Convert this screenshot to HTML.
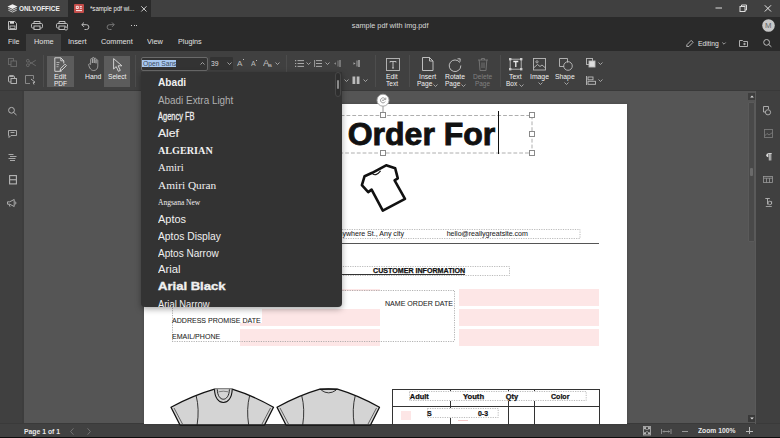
<!DOCTYPE html>
<html><head><meta charset="utf-8">
<style>
*{margin:0;padding:0;box-sizing:border-box}
html,body{width:780px;height:438px;overflow:hidden;background:#555;font-family:"Liberation Sans",sans-serif;position:relative}
.a{position:absolute}
.t{position:absolute;white-space:nowrap;line-height:1;transform-origin:0 0}
svg{position:absolute;overflow:visible}
</style></head><body>
<div class="a" style="left:0px;top:0px;width:780px;height:17px;background:#404040;"></div>
<div class="a" style="left:0px;top:0px;width:68px;height:17px;background:#434343;"></div>
<div class="a" style="left:68px;top:0px;width:83px;height:17px;background:#2a2a2a;"></div>
<div class="a" style="left:0px;top:17px;width:780px;height:34px;background:#2a2a2a;"></div>
<div class="a" style="left:26px;top:34px;width:35px;height:17px;background:#404040;"></div>
<div class="a" style="left:0px;top:51px;width:780px;height:39px;background:#404040;"></div>
<div class="a" style="left:0px;top:90px;width:780px;height:1.2px;background:#393939;"></div>
<div class="a" style="left:24px;top:91px;width:732px;height:333px;background:#555;"></div>
<div class="a" style="left:0px;top:91px;width:24px;height:333px;background:#404040;"></div>
<div class="a" style="left:22px;top:91px;width:2px;height:333px;background:#3d3d3d;"></div>
<div class="a" style="left:756px;top:91px;width:24px;height:333px;background:#404040;"></div>
<div class="a" style="left:0px;top:423.5px;width:780px;height:14px;background:#414141;"></div>
<div class="a" style="left:0px;top:423px;width:780px;height:1px;background:#3a3a3a;"></div>
<div class="a" style="left:0px;top:437px;width:780px;height:1px;background:#0c0c0c;"></div>
<div class="a" style="left:143.5px;top:103.5px;width:483.5px;height:320.5px;background:#fff;box-shadow:0 0 3px rgba(0,0,0,0.18)"></div>
<svg style="left:7px;top:4px" width="11" height="9" viewBox="0 0 11 9">
<path d="M5.5 0.3 L10.5 2.6 L5.5 4.9 L0.5 2.6 Z" fill="#f0f0f0"/>
<path d="M1.3 4.3 L5.5 6.2 L9.7 4.3" fill="none" stroke="#d8d8d8" stroke-width="1"/>
<path d="M1.3 6.2 L5.5 8.1 L9.7 6.2" fill="none" stroke="#c8c8c8" stroke-width="1"/>
</svg>
<div class="t" style="left:19.00px;top:5.71px;font-size:6.6px;font-family:'Liberation Sans';font-weight:700;color:#f0f0f0;transform:scaleX(0.971);">ONLYOFFICE</div>
<div class="a" style="left:74px;top:4px;width:10px;height:9px;background:#c44d4a;border-radius:1px"></div>
<svg style="left:74px;top:4px" width="10" height="9" viewBox="0 0 10 9"><path d="M2.3 2.3h2v2.2h-2z" fill="none" stroke="#fff" stroke-width="0.9"/><path d="M5.8 2.6h2M5.8 4.3h2M2 6.6h6" stroke="#fff" stroke-width="0.9"/></svg>
<div class="t" style="left:89.60px;top:5.69px;font-size:6.5px;font-family:'Liberation Sans';font-weight:400;color:#f0f0f0;transform:scaleX(0.931);">*sample pdf wi...</div>
<svg style="left:140.8px;top:6px" width="6" height="6" viewBox="0 0 6 6"><path d="M0.3 0.3L5.5 5.5M5.5 0.3L0.3 5.5" stroke="#ddd" stroke-width="0.9"/></svg>
<svg style="left:715px;top:7px" width="8" height="2" viewBox="0 0 8 2"><path d="M0.5 1h6.5" stroke="#ddd" stroke-width="1"/></svg>
<svg style="left:739px;top:4px" width="9" height="9" viewBox="0 0 9 9"><rect x="1" y="2.5" width="5" height="5" fill="none" stroke="#ddd" stroke-width="1"/><path d="M2.5 2.5V1h5v5H6" fill="none" stroke="#ddd" stroke-width="1"/></svg>
<svg style="left:764px;top:5px" width="8" height="7" viewBox="0 0 8 7"><path d="M0.8 0.3L7 6.5M7 0.3L0.8 6.5" stroke="#e8e8e8" stroke-width="1"/></svg>
<svg style="left:8px;top:21px" width="9" height="9" viewBox="0 0 9 9">
<path d="M0.5 0.5h6.2l1.8 1.8v6.2h-8z" fill="none" stroke="#bdbdbd" stroke-width="1"/>
<rect x="2" y="0.5" width="4" height="2.2" fill="#ddd"/><rect x="2" y="5" width="5" height="2.6" fill="none" stroke="#bdbdbd" stroke-width="0.9"/></svg>
<svg style="left:31px;top:21px" width="12" height="9" viewBox="0 0 12 9">
<path d="M3 2.5V0.5h6v2" fill="none" stroke="#bdbdbd" stroke-width="1"/>
<rect x="0.5" y="2.5" width="11" height="4.5" rx="1.2" fill="none" stroke="#bdbdbd" stroke-width="1"/>
<rect x="3" y="5" width="6" height="3.5" fill="#2a2a2a" stroke="#bdbdbd" stroke-width="1"/></svg>
<svg style="left:55.5px;top:21px" width="12" height="9" viewBox="0 0 12 9">
<path d="M3 2.5V0.5h6v2" fill="none" stroke="#bdbdbd" stroke-width="1"/>
<rect x="0.5" y="2.5" width="11" height="4.5" rx="1.2" fill="none" stroke="#bdbdbd" stroke-width="1"/>
<rect x="3" y="5" width="6" height="3.5" fill="#2a2a2a" stroke="#bdbdbd" stroke-width="1"/><circle cx="10" cy="7.5" r="1.6" fill="#2a2a2a" stroke="#bdbdbd" stroke-width="0.9"/></svg>
<svg style="left:81px;top:22px" width="9" height="8" viewBox="0 0 9 8">
<path d="M3 0.5L0.8 2.7L3 4.9" fill="none" stroke="#bdbdbd" stroke-width="1"/><path d="M0.8 2.7H5.5a2.4 2.4 0 0 1 0 4.8H3.5" fill="none" stroke="#bdbdbd" stroke-width="1"/></svg>
<svg style="left:105.5px;top:22px" width="9" height="8" viewBox="0 0 9 8">
<path d="M6 0.5L8.2 2.7L6 4.9" fill="none" stroke="#777" stroke-width="1"/><path d="M8.2 2.7H3.5a2.4 2.4 0 0 0 0 4.8H5.5" fill="none" stroke="#777" stroke-width="1"/></svg>
<div class="a" style="left:131px;top:24.6px;width:1.2px;height:1.2px;background:#ccc;"></div>
<div class="a" style="left:133.6px;top:24.6px;width:1.2px;height:1.2px;background:#ccc;"></div>
<div class="a" style="left:136.2px;top:24.6px;width:1.2px;height:1.2px;background:#ccc;"></div>
<div class="t" style="left:351.80px;top:21.62px;font-size:7.3px;font-family:'Liberation Sans';font-weight:400;color:#d9d9d9;">sample pdf with img.pdf</div>
<svg style="left:761.5px;top:19px" width="13" height="13" viewBox="0 0 13 13"><circle cx="6.5" cy="6.5" r="6.3" fill="#c8c8c8"/></svg>
<div class="t" style="left:765.00px;top:22.79px;font-size:6.5px;font-family:'Liberation Sans';font-weight:400;color:#666;transform:scaleX(1.201);">M</div>
<div class="t" style="left:7.70px;top:38.36px;font-size:7.6px;font-family:'Liberation Sans';font-weight:400;color:#e2e2e2;transform:scaleX(0.930);">File</div>
<div class="t" style="left:33.60px;top:38.36px;font-size:7.6px;font-family:'Liberation Sans';font-weight:400;color:#e2e2e2;transform:scaleX(0.967);">Home</div>
<div class="t" style="left:67.60px;top:38.36px;font-size:7.6px;font-family:'Liberation Sans';font-weight:400;color:#e2e2e2;transform:scaleX(0.974);">Insert</div>
<div class="t" style="left:100.90px;top:38.36px;font-size:7.6px;font-family:'Liberation Sans';font-weight:400;color:#e2e2e2;transform:scaleX(0.962);">Comment</div>
<div class="t" style="left:146.90px;top:38.36px;font-size:7.6px;font-family:'Liberation Sans';font-weight:400;color:#e2e2e2;transform:scaleX(0.972);">View</div>
<div class="t" style="left:177.60px;top:38.36px;font-size:7.6px;font-family:'Liberation Sans';font-weight:400;color:#e2e2e2;transform:scaleX(0.947);">Plugins</div>
<svg style="left:686px;top:40px" width="8" height="7" viewBox="0 0 8 7"><path d="M0.6 6.4L1 4.6L5.2 0.4L7.1 2.3L2.9 6.5Z" fill="none" stroke="#bdbdbd" stroke-width="0.9"/></svg>
<div class="t" style="left:697.50px;top:39.53px;font-size:7.4px;font-family:'Liberation Sans';font-weight:400;color:#e2e2e2;transform:scaleX(0.915);">Editing</div>
<svg style="left:722px;top:42px" width="4" height="3" viewBox="0 0 4 3"><path d="M0.3 0.5L2 2.2L3.7 0.5" fill="none" stroke="#bdbdbd" stroke-width="0.8"/></svg>
<svg style="left:739px;top:39.5px" width="9" height="7" viewBox="0 0 9 7"><path d="M0.5 0.5h3l1 1h4v5h-8z" fill="none" stroke="#bdbdbd" stroke-width="0.9"/><path d="M4 4h3M5.5 2.8V5.2" stroke="#bdbdbd" stroke-width="0.8"/></svg>
<svg style="left:763px;top:39px" width="9" height="8" viewBox="0 0 9 8"><circle cx="3.6" cy="3.4" r="2.9" fill="none" stroke="#bdbdbd" stroke-width="1"/><path d="M5.7 5.5L8.4 7.8" stroke="#bdbdbd" stroke-width="1"/></svg>
<div class="a" style="left:43px;top:55px;width:1px;height:32px;background:#4d4d4d;"></div>
<div class="a" style="left:135px;top:55px;width:1px;height:32px;background:#4d4d4d;"></div>
<div class="a" style="left:286px;top:55px;width:1px;height:32px;background:#4d4d4d;"></div>
<div class="a" style="left:374.5px;top:55px;width:1px;height:32px;background:#4d4d4d;"></div>
<div class="a" style="left:409px;top:55px;width:1px;height:32px;background:#4d4d4d;"></div>
<div class="a" style="left:499.5px;top:55px;width:1px;height:32px;background:#4d4d4d;"></div>
<svg style="left:8px;top:58px" width="9" height="9" viewBox="0 0 9 9"><rect x="0.5" y="0.5" width="5" height="6" fill="none" stroke="#6c6c6c" stroke-width="0.9"/><rect x="3" y="3" width="5.5" height="5.5" fill="#404040" stroke="#6c6c6c" stroke-width="0.9"/></svg>
<svg style="left:25.5px;top:58.5px" width="10" height="8" viewBox="0 0 10 8"><circle cx="1.8" cy="1.8" r="1.4" fill="none" stroke="#6c6c6c" stroke-width="0.9"/><circle cx="1.8" cy="6.2" r="1.4" fill="none" stroke="#6c6c6c" stroke-width="0.9"/><path d="M3 2.5L9.8 6.8M3 5.5L9.8 1.2" stroke="#6c6c6c" stroke-width="0.9"/></svg>
<svg style="left:8px;top:75px" width="9" height="9" viewBox="0 0 9 9"><rect x="0.5" y="1" width="6" height="6" rx="1" fill="none" stroke="#bdbdbd" stroke-width="0.9"/><rect x="1.5" y="0.3" width="4" height="1.5" fill="#bdbdbd"/><rect x="3" y="3.5" width="5.5" height="5" fill="#404040" stroke="#bdbdbd" stroke-width="0.9"/></svg>
<svg style="left:25px;top:75px" width="11" height="10" viewBox="0 0 11 10"><path d="M5 8.5H0.5V0.5H8.5V4" fill="none" stroke="#9a9a9a" stroke-width="0.8"/><path d="M6 4L10 7.2L8.2 7.6L9 9.5" fill="none" stroke="#bdbdbd" stroke-width="0.9"/></svg>
<div class="a" style="left:47px;top:55.5px;width:27px;height:31.5px;background:#5c5c5c;"></div>
<svg style="left:54px;top:56.5px" width="13" height="15" viewBox="0 0 13 15"><path d="M7.5 14.3H0.8V0.8H6.8L9.8 3.8V6.5" fill="none" stroke="#e0e0e0" stroke-width="0.9"/><path d="M6.8 0.8V3.8H9.8" fill="none" stroke="#e0e0e0" stroke-width="0.8"/><path d="M2.5 5.5H5.5M2.5 7.6H5M2.5 9.7H4.5" stroke="#d0d0d0" stroke-width="0.7"/><path d="M6 13.8L6.6 11.6L11 7.2L12.4 8.6L8 13Z" fill="none" stroke="#e0e0e0" stroke-width="0.9"/></svg>
<div class="t" style="left:54.10px;top:72.70px;font-size:7.2px;font-family:'Liberation Sans';font-weight:400;color:#f0f0f0;transform:scaleX(0.984);">Edit</div>
<div class="t" style="left:53.80px;top:79.50px;font-size:7.2px;font-family:'Liberation Sans';font-weight:400;color:#f0f0f0;transform:scaleX(0.910);">PDF</div>
<svg style="left:87.5px;top:57px" width="10" height="14" viewBox="0 0 10 14"><path d="M2.6 7.5V2.5a0.9 0.9 0 0 1 1.8 0V6V1.3a0.9 0.9 0 0 1 1.8 0V6V2a0.9 0.9 0 0 1 1.8 0v4.3V3.6a0.9 0.9 0 0 1 1.8 0v5.4c0 2.8-1.8 4.5-4 4.5c-2 0-3-1-4-2.5L0.7 8.3a0.9 0.9 0 0 1 1.5-1z" fill="none" stroke="#b0b0b0" stroke-width="0.8"/></svg>
<div class="t" style="left:84.60px;top:72.70px;font-size:7.2px;font-family:'Liberation Sans';font-weight:400;color:#f0f0f0;transform:scaleX(0.947);">Hand</div>
<div class="a" style="left:104px;top:55.5px;width:26px;height:31.5px;background:#5c5c5c;"></div>
<svg style="left:113px;top:57.5px" width="10" height="14" viewBox="0 0 10 14"><path d="M0.6 0.6V11L3.2 8.6L5.4 13.3L7.3 12.4L5.1 7.8H8.9Z" fill="none" stroke="#ddd" stroke-width="0.9"/></svg>
<div class="t" style="left:107.70px;top:72.70px;font-size:7.2px;font-family:'Liberation Sans';font-weight:400;color:#f0f0f0;transform:scaleX(0.924);">Select</div>
<div class="a" style="left:140.5px;top:56.5px;width:67px;height:14px;background:#333;border:1px solid #6a6a6a;border-radius:2px"></div>
<div class="a" style="left:142px;top:59.6px;width:34.3px;height:7.6px;background:#a8c8f0;"></div>
<div class="t" style="left:142.50px;top:60.30px;font-size:7.2px;font-family:'Liberation Sans';font-weight:400;color:#3a4a5a;transform:scaleX(0.930);">Open Sans</div>
<svg style="left:200px;top:61.5px" width="5" height="3" viewBox="0 0 5 3"><path d="M0.5 2.5L2.5 0.5L4.5 2.5" fill="none" stroke="#bbb" stroke-width="0.8"/></svg>
<div class="a" style="left:209.5px;top:57px;width:23.3px;height:12.5px;background:#333;border-radius:1px"></div>
<div class="t" style="left:211.00px;top:59.93px;font-size:7.4px;font-family:'Liberation Sans';font-weight:400;color:#ddd;transform:scaleX(0.923);">39</div>
<svg style="left:226.5px;top:62px" width="5" height="3" viewBox="0 0 5 3"><path d="M0.5 0.5L2.5 2.5L4.5 0.5" fill="none" stroke="#bbb" stroke-width="0.8"/></svg>
<div class="t" style="left:237.10px;top:59.85px;font-size:7.5px;font-family:'Liberation Sans';font-weight:400;color:#bbb;transform:scaleX(1.079);">A</div>
<div class="a" style="left:242.5px;top:59px;width:1.4px;height:1.4px;background:#bbb;"></div>
<div class="t" style="left:250.80px;top:60.69px;font-size:6.5px;font-family:'Liberation Sans';font-weight:400;color:#bbb;transform:scaleX(1.083);">A</div>
<div class="a" style="left:255.6px;top:59.5px;width:1.3px;height:1.3px;background:#bbb;"></div>
<div class="t" style="left:262.70px;top:59.18px;font-size:9px;font-family:'Liberation Sans';font-weight:400;color:#c0c0c0;transform:scaleX(1.049);">A</div>
<div class="t" style="left:267.80px;top:62.42px;font-size:6px;font-family:'Liberation Sans';font-weight:400;color:#bbb;transform:scaleX(1.166);">a</div>
<svg style="left:274.5px;top:62px" width="5" height="3" viewBox="0 0 5 3"><path d="M0.5 0.5L2.5 2.5L4.5 0.5" fill="none" stroke="#bbb" stroke-width="0.8"/></svg>
<svg style="left:294.5px;top:59.5px" width="9" height="7" viewBox="0 0 9 7"><path d="M0 0.6h1.2M0 3.5h1.2M0 6.4h1.2" stroke="#a8a8a8" stroke-width="1.1"/><path d="M2.5 0.6h6.5M2.5 3.5h6.5M2.5 6.4h6.5" stroke="#a8a8a8" stroke-width="1"/></svg>
<svg style="left:305.5px;top:62px" width="5" height="3" viewBox="0 0 5 3"><path d="M0.5 0.5L2.5 2.5L4.5 0.5" fill="none" stroke="#bbb" stroke-width="0.8"/></svg>
<svg style="left:314px;top:59.5px" width="8" height="7" viewBox="0 0 8 7"><path d="M0.6 0v7" stroke="#a8a8a8" stroke-width="0.9"/><path d="M2 0.6h6M2 3.5h6M2 6.4h6" stroke="#a8a8a8" stroke-width="1"/></svg>
<svg style="left:324.7px;top:62px" width="5" height="3" viewBox="0 0 5 3"><path d="M0.5 0.5L2.5 2.5L4.5 0.5" fill="none" stroke="#bbb" stroke-width="0.8"/></svg>
<svg style="left:333px;top:59.5px" width="8" height="7" viewBox="0 0 8 7"><path d="M5 0.5v6" stroke="#888" stroke-width="0.9"/><path d="M7 0v7" stroke="#888" stroke-width="1.5"/><path d="M3 2.3L1 3.5L3 4.7Z" fill="#888"/></svg>
<svg style="left:351.5px;top:59.5px" width="8" height="7" viewBox="0 0 8 7"><path d="M5 0.5v6" stroke="#a8a8a8" stroke-width="0.9"/><path d="M7 0v7" stroke="#a8a8a8" stroke-width="1.5"/><path d="M1.5 2.3L3.5 3.5L1.5 4.7Z" fill="#a8a8a8"/></svg>
<svg style="left:343.5px;top:79px" width="5" height="3" viewBox="0 0 5 3"><path d="M0.5 0.5L2.5 2.5L4.5 0.5" fill="none" stroke="#bbb" stroke-width="0.8"/></svg>
<svg style="left:351.5px;top:75.8px" width="8" height="8" viewBox="0 0 8 8"><rect x="0.5" y="0.5" width="2.8" height="7.5" fill="#bbb"/><rect x="4.7" y="0.5" width="2.8" height="7.5" fill="#bbb"/></svg>
<svg style="left:362.7px;top:79px" width="5" height="3" viewBox="0 0 5 3"><path d="M0.5 0.5L2.5 2.5L4.5 0.5" fill="none" stroke="#bbb" stroke-width="0.8"/></svg>
<svg style="left:385.5px;top:57.5px" width="14" height="13" viewBox="0 0 14 13"><rect x="0.5" y="0.5" width="13" height="12" fill="none" stroke="#bbb" stroke-width="0.9"/><path d="M4 3.5h6M7 3.5v6.5M6 10h2M4 3.5v1M10 3.5v1" fill="none" stroke="#ccc" stroke-width="0.9"/></svg>
<div class="t" style="left:386.30px;top:72.70px;font-size:7.2px;font-family:'Liberation Sans';font-weight:400;color:#f0f0f0;transform:scaleX(0.943);">Edit</div>
<div class="t" style="left:386.30px;top:79.60px;font-size:7.2px;font-family:'Liberation Sans';font-weight:400;color:#f0f0f0;transform:scaleX(0.908);">Text</div>
<svg style="left:422px;top:57px" width="12" height="14" viewBox="0 0 12 14"><path d="M0.5 0.5h7l3.5 3.5v9.5h-10.5z" fill="none" stroke="#ccc" stroke-width="0.9"/><path d="M7.5 0.5v3.5h3.5" fill="none" stroke="#ccc" stroke-width="0.9"/></svg>
<div class="t" style="left:418.70px;top:72.70px;font-size:7.2px;font-family:'Liberation Sans';font-weight:400;color:#f0f0f0;transform:scaleX(0.950);">Insert</div>
<div class="t" style="left:416.70px;top:79.60px;font-size:7.2px;font-family:'Liberation Sans';font-weight:400;color:#f0f0f0;transform:scaleX(0.910);">Page</div>
<svg style="left:433px;top:83.5px" width="5" height="3" viewBox="0 0 5 3"><path d="M0.5 0.5L2.5 2.5L4.5 0.5" fill="none" stroke="#bbb" stroke-width="0.8"/></svg>
<svg style="left:448px;top:57.5px" width="14" height="14" viewBox="0 0 14 14"><path d="M11.8 4.5A5.8 5.8 0 1 0 12.8 7.5" fill="none" stroke="#ccc" stroke-width="0.9"/><path d="M9.5 0.8L12.2 0.8L12 3.8" fill="none" stroke="#ccc" stroke-width="0.9"/></svg>
<div class="t" style="left:445.00px;top:72.70px;font-size:7.2px;font-family:'Liberation Sans';font-weight:400;color:#f0f0f0;transform:scaleX(0.942);">Rotate</div>
<div class="t" style="left:444.70px;top:79.60px;font-size:7.2px;font-family:'Liberation Sans';font-weight:400;color:#f0f0f0;transform:scaleX(0.910);">Page</div>
<svg style="left:461px;top:83.5px" width="5" height="3" viewBox="0 0 5 3"><path d="M0.5 0.5L2.5 2.5L4.5 0.5" fill="none" stroke="#bbb" stroke-width="0.8"/></svg>
<svg style="left:477.5px;top:57.5px" width="10" height="13" viewBox="0 0 10 13"><path d="M0 2h10M3.5 2V0.5h3V2M1.2 2l0.8 10.5h6l0.8-10.5M4 4.5v5.5M6 4.5v5.5" fill="none" stroke="#777" stroke-width="0.9"/></svg>
<div class="t" style="left:472.50px;top:72.70px;font-size:7.2px;font-family:'Liberation Sans';font-weight:400;color:#808080;transform:scaleX(0.923);">Delete</div>
<div class="t" style="left:475.00px;top:79.60px;font-size:7.2px;font-family:'Liberation Sans';font-weight:400;color:#808080;transform:scaleX(0.892);">Page</div>
<svg style="left:508.5px;top:58px" width="13.5" height="12.5" viewBox="0 0 13.5 12.5"><rect x="1.2" y="1.2" width="11" height="10" fill="none" stroke="#bbb" stroke-width="0.9"/><rect x="0" y="0" width="2.4" height="2.4" fill="#ccc"/><rect x="11" y="0" width="2.4" height="2.4" fill="#ccc"/><rect x="0" y="10" width="2.4" height="2.4" fill="#ccc"/><rect x="11" y="10" width="2.4" height="2.4" fill="#ccc"/><path d="M4.3 3.5h5M6.8 3.5v5.5" stroke="#eee" stroke-width="1.3"/></svg>
<div class="t" style="left:508.70px;top:72.70px;font-size:7.2px;font-family:'Liberation Sans';font-weight:400;color:#f0f0f0;transform:scaleX(0.954);">Text</div>
<div class="t" style="left:506.30px;top:79.60px;font-size:7.2px;font-family:'Liberation Sans';font-weight:400;color:#f0f0f0;transform:scaleX(0.903);">Box</div>
<svg style="left:518.5px;top:83.5px" width="5" height="3" viewBox="0 0 5 3"><path d="M0.5 0.5L2.5 2.5L4.5 0.5" fill="none" stroke="#bbb" stroke-width="0.8"/></svg>
<svg style="left:533px;top:57.5px" width="13" height="12.5" viewBox="0 0 13 12.5"><rect x="0.5" y="0.5" width="12" height="11.5" fill="none" stroke="#bbb" stroke-width="0.9"/><circle cx="4" cy="3.8" r="1.1" fill="none" stroke="#bbb" stroke-width="0.8"/><path d="M0.5 10L4.5 6.5L7 8.5L9 7L12.5 10" fill="none" stroke="#bbb" stroke-width="0.9"/></svg>
<div class="t" style="left:529.70px;top:72.70px;font-size:7.2px;font-family:'Liberation Sans';font-weight:400;color:#f0f0f0;transform:scaleX(0.949);">Image</div>
<svg style="left:538px;top:82px" width="5" height="3" viewBox="0 0 5 3"><path d="M0.5 0.5L2.5 2.5L4.5 0.5" fill="none" stroke="#bbb" stroke-width="0.8"/></svg>
<svg style="left:558.5px;top:57.5px" width="14" height="12.5" viewBox="0 0 14 12.5"><path d="M5 8.5H0.5V0.5H8.5V4.5" fill="none" stroke="#bbb" stroke-width="0.9"/><circle cx="9" cy="8" r="4.3" fill="none" stroke="#bbb" stroke-width="0.9"/></svg>
<div class="t" style="left:555.30px;top:72.70px;font-size:7.2px;font-family:'Liberation Sans';font-weight:400;color:#f0f0f0;transform:scaleX(0.946);">Shape</div>
<svg style="left:563.5px;top:82px" width="5" height="3" viewBox="0 0 5 3"><path d="M0.5 0.5L2.5 2.5L4.5 0.5" fill="none" stroke="#bbb" stroke-width="0.8"/></svg>
<svg style="left:585.5px;top:58px" width="10" height="10" viewBox="0 0 10 10"><rect x="0.5" y="0.5" width="6" height="6" fill="none" stroke="#bbb" stroke-width="0.9"/><rect x="3" y="3" width="6" height="6" fill="#ddd" stroke="#bbb" stroke-width="0.9"/></svg>
<svg style="left:597.5px;top:62px" width="5" height="3" viewBox="0 0 5 3"><path d="M0.5 0.5L2.5 2.5L4.5 0.5" fill="none" stroke="#bbb" stroke-width="0.8"/></svg>
<svg style="left:585.5px;top:75.5px" width="10" height="9" viewBox="0 0 10 9"><path d="M0.5 0v9" stroke="#bbb" stroke-width="0.9"/><rect x="2" y="1" width="5" height="2.8" fill="none" stroke="#bbb" stroke-width="0.9"/><rect x="2" y="5.3" width="7.5" height="3" fill="none" stroke="#bbb" stroke-width="0.9"/></svg>
<svg style="left:597.5px;top:79px" width="5" height="3" viewBox="0 0 5 3"><path d="M0.5 0.5L2.5 2.5L4.5 0.5" fill="none" stroke="#bbb" stroke-width="0.8"/></svg>
<svg style="left:7.5px;top:106.5px" width="9" height="8" viewBox="0 0 9 8"><circle cx="3.5" cy="3.3" r="2.9" fill="none" stroke="#b5b5b5" stroke-width="1"/><path d="M5.6 5.4L8.5 8" stroke="#b5b5b5" stroke-width="1"/></svg>
<svg style="left:7.5px;top:130px" width="9" height="8" viewBox="0 0 9 8"><path d="M0.5 0.5h8v5h-5.5l-2 2v-2h-0.5z" fill="none" stroke="#b5b5b5" stroke-width="0.9"/><path d="M2.5 2.5h4" stroke="#b5b5b5" stroke-width="0.9"/></svg>
<svg style="left:8px;top:153.5px" width="9" height="7" viewBox="0 0 9 7"><path d="M0.5 0.5h5M2 2.5h6.5M0.5 4.5h7M2 6.5h5" stroke="#b5b5b5" stroke-width="0.9"/></svg>
<svg style="left:8.5px;top:175px" width="8" height="9.5" viewBox="0 0 8 9.5"><rect x="0.6" y="0.6" width="6.8" height="8.3" fill="none" stroke="#b5b5b5" stroke-width="1.1"/><path d="M0.6 4.75h6.8" stroke="#b5b5b5" stroke-width="1.1"/></svg>
<svg style="left:7px;top:199px" width="10" height="8" viewBox="0 0 10 8"><path d="M0.5 2.8h2.2l4.5-2.3v7l-4.5-2.3H0.5z" fill="none" stroke="#b5b5b5" stroke-width="0.9"/><path d="M2 5.2l1 2.5" stroke="#b5b5b5" stroke-width="0.9"/><path d="M8.2 2.5a2 2 0 0 1 0 3" fill="none" stroke="#b5b5b5" stroke-width="0.9"/></svg>
<svg style="left:763px;top:105.5px" width="8" height="9.5" viewBox="0 0 8 9.5"><path d="M3 6H0.5V0.5H5.5V3" fill="none" stroke="#b5b5b5" stroke-width="0.9"/><circle cx="5" cy="6.3" r="2.6" fill="none" stroke="#b5b5b5" stroke-width="0.9"/></svg>
<svg style="left:763.5px;top:129px" width="9" height="9" viewBox="0 0 9 9"><rect x="0.5" y="0.5" width="8" height="8" fill="none" stroke="#7a7a7a" stroke-width="0.9"/><path d="M0.5 7L3 4.5L5 6L8.5 3.5" fill="none" stroke="#7a7a7a" stroke-width="0.9"/></svg>
<svg style="left:765px;top:152.5px" width="7" height="7.5" viewBox="0 0 7 7.5"><path d="M3.2 0.5h3.5M4.3 0.5v7M5.8 0.5v7" stroke="#ddd" stroke-width="0.9"/><path d="M3.3 0.3a2 2 0 0 0 0 4z" fill="#ddd"/></svg>
<svg style="left:763px;top:176px" width="10" height="7" viewBox="0 0 10 7"><rect x="0.5" y="0.5" width="9" height="6" fill="none" stroke="#9a9a9a" stroke-width="0.8"/><path d="M0.5 2.2h9M3.5 2.2v4.5M6.5 2.2v4.5" stroke="#9a9a9a" stroke-width="0.8"/></svg>
<svg style="left:764.5px;top:198px" width="7.5" height="9" viewBox="0 0 7.5 9"><path d="M0.3 0.5h4.5M2.5 0.5v6" stroke="#b5b5b5" stroke-width="0.9"/><circle cx="4.8" cy="5" r="1.8" fill="none" stroke="#b5b5b5" stroke-width="0.8"/><path d="M6.6 3.2v3M0.8 8.5h6" stroke="#b5b5b5" stroke-width="0.8"/></svg>
<div class="a" style="left:748px;top:93px;width:7px;height:7px;background:#3e3e3e;"></div>
<svg style="left:749.5px;top:95px" width="4" height="3" viewBox="0 0 4 3"><path d="M0.2 2.6L2 0.4L3.8 2.6Z" fill="#e0e0e0"/></svg>
<div class="a" style="left:748px;top:415px;width:7px;height:7px;background:#3a3a3a;"></div>
<svg style="left:749.5px;top:417.2px" width="4" height="3" viewBox="0 0 4 3"><path d="M0.2 0.4L2 2.6L3.8 0.4Z" fill="#e0e0e0"/></svg>
<div class="a" style="left:748px;top:101.8px;width:6.8px;height:140.5px;background:#494949;border:0.6px solid #5a5a5a;border-radius:1px"></div>
<div class="a" style="left:749.5px;top:167.5px;width:3.8px;height:8.5px;background:#6a6a6a;border-radius:1px"></div>
<div class="a" style="left:755.3px;top:91px;width:0.8px;height:333px;background:#5a5a5a;"></div>
<div class="t" style="left:24.30px;top:427.73px;font-size:7.4px;font-family:'Liberation Sans';font-weight:700;color:#e8e8e8;transform:scaleX(0.924);">Page 1 of 1</div>
<svg style="left:69.5px;top:428px" width="4" height="7" viewBox="0 0 4 7"><path d="M3.5 0.3L0.6 3.5L3.5 6.7" fill="none" stroke="#777" stroke-width="0.9"/></svg>
<svg style="left:86.5px;top:428px" width="4" height="7" viewBox="0 0 4 7"><path d="M0.5 0.3L3.4 3.5L0.5 6.7" fill="none" stroke="#777" stroke-width="0.9"/></svg>
<svg style="left:643px;top:426px" width="8" height="9.5" viewBox="0 0 8 9.5"><rect x="0.5" y="0.5" width="7" height="8.5" fill="none" stroke="#aaa" stroke-width="0.9"/><path d="M1.8 1.8L3.5 4M6.2 1.8L4.5 4M1.8 7.7L3.5 5.5M6.2 7.7L4.5 5.5" stroke="#c8c8c8" stroke-width="0.9"/><path d="M1.2 1.2h2.3l-2.3 2.3zM6.8 1.2h-2.3l2.3 2.3zM1.2 8.3h2.3l-2.3-2.3zM6.8 8.3h-2.3l2.3-2.3z" fill="#d0d0d0"/></svg>
<svg style="left:660.5px;top:428.5px" width="10.5" height="5" viewBox="0 0 10.5 5"><path d="M0.5 0v5M10 0v5M2 2.5h6.5M3 1.5L2 2.5L3 3.5M7.5 1.5L8.5 2.5L7.5 3.5" fill="none" stroke="#999" stroke-width="0.9"/></svg>
<div class="a" style="left:681.5px;top:430.5px;width:6.5px;height:1px;background:#999;"></div>
<div class="t" style="left:698.30px;top:427.23px;font-size:7.4px;font-family:'Liberation Sans';font-weight:700;color:#e8e8e8;transform:scaleX(0.912);">Zoom 100%</div>
<div class="a" style="left:746.3px;top:430.5px;width:6.7px;height:1px;background:#bbb;"></div>
<div class="a" style="left:749.2px;top:427.3px;width:1px;height:7.2px;background:#bbb;"></div>
<svg style="left:230px;top:115px" width="302.5" height="38.5" viewBox="0 0 302.5 38.5"><rect x="0.5" y="0.5" width="301.5" height="37.5" fill="none" stroke="#999" stroke-width="0.8" stroke-dasharray="3.8 2"/></svg>
<div class="t" style="left:347.70px;top:117.50px;font-size:32px;font-family:'Liberation Sans';font-weight:700;color:#111;-webkit-text-stroke:0.9px #111;">Order For</div>
<div class="a" style="left:497.5px;top:111px;width:1.3px;height:42.5px;background:#111;"></div>
<svg style="left:375.5px;top:93px" width="14" height="23" viewBox="0 0 14 23"><path d="M7 13V23" stroke="#8a8a8a" stroke-width="0.9"/><circle cx="7" cy="7.2" r="6" fill="#fff" stroke="#a0a0a0" stroke-width="0.9"/><path d="M9.3 6.2A2.5 2.5 0 1 0 9.2 8.6" fill="none" stroke="#888" stroke-width="0.9"/><path d="M9.8 4.6V6.6H7.8" fill="none" stroke="#888" stroke-width="0.8"/><circle cx="7" cy="7.2" r="0.8" fill="#888"/></svg>
<div class="a" style="left:380.4px;top:112.4px;width:5.2px;height:5.2px;background:#fff;border:0.8px solid #8a8a8a"></div>
<div class="a" style="left:380.4px;top:150.4px;width:5.2px;height:5.2px;background:#fff;border:0.8px solid #8a8a8a"></div>
<div class="a" style="left:529.4px;top:112.4px;width:5.2px;height:5.2px;background:#fff;border:0.8px solid #8a8a8a"></div>
<div class="a" style="left:529.4px;top:131.4px;width:5.2px;height:5.2px;background:#fff;border:0.8px solid #8a8a8a"></div>
<div class="a" style="left:529.4px;top:150.4px;width:5.2px;height:5.2px;background:#fff;border:0.8px solid #8a8a8a"></div>
<svg style="left:355px;top:160px" width="60" height="58" viewBox="355 160 60 58">
<path d="M372.2 172.8 L364.6 176.2 L361.9 185.2 L368.2 192.1 L371.6 189.6 L382.8 210.6 L405 198.8 L394.6 180.3 L397.8 178.3 L395.2 168.3 L386.1 165.3 Z" fill="#fff" stroke="#111" stroke-width="2.6" stroke-linejoin="round"/>
<path d="M371.8 173.2 Q375.5 177.2 380.6 170.8" fill="none" stroke="#111" stroke-width="1.1"/>
</svg>
<svg style="left:200px;top:228.8px" width="380.5" height="10.0" viewBox="0 0 380.5 10.0"><rect x="0.5" y="0.5" width="379.5" height="9.0" fill="none" stroke="#a8a8a8" stroke-width="0.8" stroke-dasharray="1.2 1.2"/></svg>
<div class="t" style="left:320.50px;top:230.33px;font-size:7.05px;font-family:'Liberation Sans';font-weight:400;color:#1a1a1a;-webkit-text-stroke:0.05px #1a1a1a;">123 Anywhere St., Any city</div>
<div class="t" style="left:446.70px;top:230.33px;font-size:7.05px;font-family:'Liberation Sans';font-weight:400;color:#1a1a1a;-webkit-text-stroke:0.05px #1a1a1a;">hello@reallygreatsite.com</div>
<div class="a" style="left:172px;top:243px;width:426.5px;height:1px;background:#555;"></div>
<svg style="left:172px;top:266.3px" width="338" height="10.0" viewBox="0 0 338 10.0"><rect x="0.5" y="0.5" width="337" height="9.0" fill="none" stroke="#a8a8a8" stroke-width="0.8" stroke-dasharray="1.2 1.2"/></svg>
<div class="t" style="left:372.50px;top:267.12px;font-size:7.3px;font-family:'Liberation Sans';font-weight:700;color:#111;transform:scaleX(0.974);-webkit-text-stroke:0.25px #111;">CUSTOMER INFORMATION</div>
<div class="a" style="left:172px;top:274px;width:292.7px;height:0.8px;background:#333;"></div>
<div class="a" style="left:459.2px;top:288.6px;width:140px;height:17.599999999999966px;background:#fde6e6;"></div>
<div class="a" style="left:459.2px;top:309.2px;width:140px;height:17.0px;background:#fde6e6;"></div>
<div class="a" style="left:459.2px;top:329.2px;width:140px;height:17.0px;background:#fde6e6;"></div>
<div class="a" style="left:342px;top:288.6px;width:37.5px;height:2.3px;background:#fde6e6;"></div>
<div class="a" style="left:240px;top:309.2px;width:139.5px;height:17px;background:#fde6e6;"></div>
<div class="a" style="left:240px;top:329.2px;width:139.5px;height:17px;background:#fde6e6;"></div>
<div class="a" style="left:172px;top:307px;width:90px;height:15.8px;background:#fff;"></div>
<svg style="left:172px;top:290.3px" width="283" height="1" viewBox="0 0 283 1"><path d="M0 0.5H283" stroke="#a0a0a0" stroke-width="0.8" stroke-dasharray="1.2 1.2"/></svg>
<svg style="left:172px;top:340.8px" width="283" height="1" viewBox="0 0 283 1"><path d="M0 0.5H283" stroke="#a0a0a0" stroke-width="0.8" stroke-dasharray="1.2 1.2"/></svg>
<svg style="left:171.8px;top:291px" width="1" height="50.30000000000001" viewBox="0 0 1 50.30000000000001"><path d="M0.5 0V50.30000000000001" stroke="#a0a0a0" stroke-width="0.8" stroke-dasharray="1.2 1.2"/></svg>
<svg style="left:454.2px;top:291px" width="1" height="50.30000000000001" viewBox="0 0 1 50.30000000000001"><path d="M0.5 0V50.30000000000001" stroke="#a0a0a0" stroke-width="0.8" stroke-dasharray="1.2 1.2"/></svg>
<div class="t" style="left:385.00px;top:299.83px;font-size:7.05px;font-family:'Liberation Sans';font-weight:400;color:#1a1a1a;-webkit-text-stroke:0.05px #1a1a1a;">NAME ORDER DATE</div>
<div class="t" style="left:172.00px;top:316.83px;font-size:7.05px;font-family:'Liberation Sans';font-weight:400;color:#1a1a1a;-webkit-text-stroke:0.05px #1a1a1a;">ADDRESS PROMISE DATE</div>
<div class="t" style="left:172.00px;top:333.13px;font-size:7.05px;font-family:'Liberation Sans';font-weight:400;color:#1a1a1a;-webkit-text-stroke:0.05px #1a1a1a;">EMAIL/PHONE</div>
<svg style="left:167.9px;top:384px" width="108.49999999999997" height="40" viewBox="167.9 384 108.49999999999997 40">
<path d="M214.4 389.2 Q192.65 395.5 170.9 407.3 L179.9 425 L264.4 425 L273.4 407.3 Q252.75 395.5 232.1 389.2 Z" fill="#d4d4d4" stroke="#111" stroke-width="1.3" stroke-linejoin="round"/>
<path d="M195.9995 395.5 Q199.4995 409 196.9995 425M249.5699 395.5 Q246.0699 409 248.5699 425" fill="none" stroke="#222" stroke-width="0.9"/>
<path d="M173.9 408 L182.9 425M270.4 408 L261.4 425" fill="none" stroke="#444" stroke-width="0.8"/>
<path d="M214.4 389.2 C214.70000000000002 407 231.79999999999998 407 232.1 389.2" fill="#d4d4d4" stroke="#111" stroke-width="1.1"/><path d="M217.20000000000002 389.4 C217.4 402.5 229.1 402.5 229.29999999999998 389.4" fill="#d4d4d4" stroke="#111" stroke-width="0.9"/><path d="M218.4 391.8 Q223.25 390.6 228.1 391.8" fill="none" stroke="#555" stroke-width="0.7"/></svg>
<svg style="left:273.6px;top:384px" width="108.5" height="40" viewBox="273.6 384 108.5 40">
<path d="M319.4 389.2 Q298.0 395.5 276.6 407.3 L285.6 425 L370.1 425 L379.1 407.3 Q358.1 395.5 337.1 389.2 Z" fill="#d4d4d4" stroke="#111" stroke-width="1.3" stroke-linejoin="round"/>
<path d="M301.2956 395.5 Q304.7956 409 302.2956 425M354.86600000000004 395.5 Q351.36600000000004 409 353.86600000000004 425" fill="none" stroke="#222" stroke-width="0.9"/>
<path d="M279.6 408 L288.6 425M376.1 408 L367.1 425" fill="none" stroke="#444" stroke-width="0.8"/>
<path d="M319.4 389.4 Q328.25 388.4 337.1 389.4" fill="none" stroke="#111" stroke-width="1.3"/><path d="M320.9 390.2 Q328.25 395.5 335.6 390.2" fill="none" stroke="#222" stroke-width="0.9"/></svg>
<div class="a" style="left:391.7px;top:389px;width:208.6px;height:1px;background:#333;"></div>
<div class="a" style="left:391.7px;top:389px;width:1px;height:36px;background:#333;"></div>
<div class="a" style="left:599.3px;top:389px;width:1px;height:36px;background:#333;"></div>
<div class="a" style="left:391.7px;top:405.5px;width:208.6px;height:1px;background:#333;"></div>
<div class="a" style="left:450px;top:389px;width:1px;height:36px;background:#333;"></div>
<div class="a" style="left:507.5px;top:389px;width:1px;height:36px;background:#333;"></div>
<div class="a" style="left:533.8px;top:389px;width:1px;height:36px;background:#333;"></div>
<div class="a" style="left:409px;top:391.3px;width:177.7px;height:9.9px;background:#fff;"></div>
<svg style="left:409px;top:391.3px" width="177.70000000000005" height="10.0" viewBox="0 0 177.70000000000005 10.0"><rect x="0.5" y="0.5" width="176.70000000000005" height="9.0" fill="none" stroke="#a8a8a8" stroke-width="0.8" stroke-dasharray="1.2 1.2"/></svg>
<div class="t" style="left:409.80px;top:392.93px;font-size:7.4px;font-family:'Liberation Sans';font-weight:700;color:#111;-webkit-text-stroke:0.25px #111;">Adult</div>
<div class="t" style="left:462.60px;top:392.93px;font-size:7.4px;font-family:'Liberation Sans';font-weight:700;color:#111;transform:scaleX(1.034);-webkit-text-stroke:0.25px #111;">Youth</div>
<div class="t" style="left:505.70px;top:392.93px;font-size:7.4px;font-family:'Liberation Sans';font-weight:700;color:#111;-webkit-text-stroke:0.25px #111;">Qty</div>
<div class="t" style="left:551.40px;top:392.93px;font-size:7.4px;font-family:'Liberation Sans';font-weight:700;color:#111;transform:scaleX(0.953);-webkit-text-stroke:0.25px #111;">Color</div>
<div class="a" style="left:400.5px;top:410.5px;width:10px;height:9px;background:#fde6e6;"></div>
<div class="a" style="left:426.7px;top:408.2px;width:71.7px;height:10px;background:#fff;"></div>
<svg style="left:426.7px;top:408.2px" width="71.69999999999999" height="10.0" viewBox="0 0 71.69999999999999 10.0"><rect x="0.5" y="0.5" width="70.69999999999999" height="9.0" fill="none" stroke="#a8a8a8" stroke-width="0.8" stroke-dasharray="1.2 1.2"/></svg>
<div class="t" style="left:427.30px;top:410.43px;font-size:7.4px;font-family:'Liberation Sans';font-weight:700;color:#111;transform:scaleX(0.952);-webkit-text-stroke:0.25px #111;">S</div>
<div class="t" style="left:478.00px;top:410.43px;font-size:7.4px;font-family:'Liberation Sans';font-weight:700;color:#111;transform:scaleX(0.935);-webkit-text-stroke:0.25px #111;">0-3</div>
<div class="a" style="left:457.8px;top:419.8px;width:10.4px;height:1.5px;background:#f5c8c8;"></div>
<div class="a" style="left:141px;top:71.5px;width:200.5px;height:235.3px;background:#333;border-radius:0 0 4px 4px;box-shadow:0 2px 6px rgba(0,0,0,0.35)"></div>
<div class="a" style="left:335.2px;top:72px;width:6.3px;height:24.6px;background:#2e2e2e;border:1px solid #474747;border-radius:3px"></div>
<div class="a" style="left:337px;top:79.7px;width:2.4px;height:9.1px;background:#8a8a8a;border-radius:1px"></div>
<div class="a" style="left:0;top:0;width:780px;height:306.6px;overflow:hidden">
<div class="t" style="left:158.00px;top:77.31px;font-size:11.2px;font-family:'Liberation Sans';font-weight:700;color:#f0f0f0;transform:scaleX(0.907);">Abadi</div>
<div class="t" style="left:158.00px;top:94.91px;font-size:10.5px;font-family:'Liberation Sans';font-weight:400;color:#b0b0b0;transform:scaleX(0.942);">Abadi Extra Light</div>
<div class="t" style="left:158.00px;top:111.14px;font-size:11.4px;font-family:'Liberation Sans';font-weight:400;color:#f0f0f0;transform:scaleX(0.655);-webkit-text-stroke:0.3px #f0f0f0;">Agency FB</div>
<div class="t" style="left:158.00px;top:128.48px;font-size:11px;font-family:'Liberation Sans';font-weight:400;color:#f0f0f0;transform:scaleX(1.107);-webkit-text-stroke:0.15px #f0f0f0;">Alef</div>
<div class="t" style="left:158.00px;top:145.42px;font-size:11.2px;font-family:'Liberation Serif';font-weight:700;color:#f0f0f0;transform:scaleX(0.908);">ALGERIAN</div>
<div class="t" style="left:158.00px;top:162.92px;font-size:10.6px;font-family:'Liberation Serif';font-weight:400;color:#f0f0f0;transform:scaleX(1.014);">Amiri</div>
<div class="t" style="left:158.00px;top:179.59px;font-size:11px;font-family:'Liberation Serif';font-weight:400;color:#f0f0f0;transform:scaleX(1.030);">Amiri Quran</div>
<div class="t" style="left:158.00px;top:199.27px;font-size:7.8px;font-family:'Liberation Serif';font-weight:400;color:#f0f0f0;transform:scaleX(0.962);">Angsana New</div>
<div class="t" style="left:158.00px;top:213.65px;font-size:10.8px;font-family:'Liberation Sans';font-weight:400;color:#f0f0f0;transform:scaleX(1.017);">Aptos</div>
<div class="t" style="left:158.00px;top:230.65px;font-size:10.8px;font-family:'Liberation Sans';font-weight:400;color:#f0f0f0;transform:scaleX(0.954);">Aptos Display</div>
<div class="t" style="left:158.00px;top:247.65px;font-size:10.8px;font-family:'Liberation Sans';font-weight:400;color:#f0f0f0;transform:scaleX(0.929);">Aptos Narrow</div>
<div class="t" style="left:158.00px;top:264.48px;font-size:11px;font-family:'Liberation Sans';font-weight:400;color:#f0f0f0;transform:scaleX(1.027);">Arial</div>
<div class="t" style="left:158.00px;top:281.14px;font-size:11.4px;font-family:'Liberation Sans';font-weight:700;color:#f0f0f0;transform:scaleX(1.147);-webkit-text-stroke:0.35px #f0f0f0;">Arial Black</div>
<div class="t" style="left:158.00px;top:298.65px;font-size:10.8px;font-family:'Liberation Sans';font-weight:400;color:#f0f0f0;transform:scaleX(0.868);">Arial Narrow</div>
</div>
</body></html>
